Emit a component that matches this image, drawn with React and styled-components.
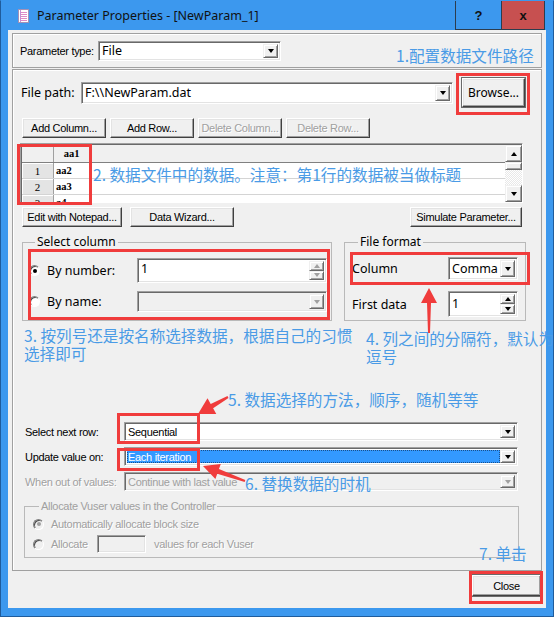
import React from "react";
import styled, { createGlobalStyle } from "styled-components";

const SANS = `"Liberation Sans", Arial, sans-serif`;
const UI = `"Noto Sans", "Open Sans", sans-serif`;
const CJK = `"Noto Sans CJK SC", "Noto Sans", sans-serif`;

const GlobalStyle = createGlobalStyle`
  html, body { margin: 0; padding: 0; background: #fff; }
  body { font-family: ${SANS}; }
  * { box-sizing: border-box; }
`;

const Window = styled.div`
  position: relative;
  width: 554px;
  height: 617px;
  background: #3c98ee;
  border: 1px solid #1f5c9c;
  border-top-color: #3c98ee;
  overflow: hidden;
  display: flex;
  flex-direction: column;
`;

const TitleBar = styled.div`
  height: 29px;
  flex: none;
  display: flex;
  align-items: stretch;
  padding: 0 8px 0 17px;
`;

const TitleText = styled.div`
  flex: 1;
  display: flex;
  align-items: center;
  margin-left: 8px;
  font: 12.5px ${UI};
  color: #111;
`;

const CaptionButton = styled.div`
  width: ${(p) => (p.$close ? 44 : 46)}px;
  display: flex;
  align-items: center;
  justify-content: center;
  background: ${(p) => (p.$close ? "#c75050" : "transparent")};
  border-left: 1px solid #2c3c4e;
  border-bottom: 1px solid #2c3c4e;
  border-right: ${(p) => (p.$close ? "1px solid #2c3c4e" : "none")};
  font: bold 13px ${SANS};
  color: #111;
`;

const Client = styled.div`
  margin: 0 7px;
  height: 578px;
  flex: none;
  background: #f0f0f0;
  padding: 3px 4px 0;
  display: flex;
  flex-direction: column;
`;

const Panel = styled.div`
  width: 530px;
  height: ${(p) => p.$h}px;
  margin-top: ${(p) => p.$mt || 0}px;
  border: 1px solid #a0a0a0;
  box-shadow: inset 1px 1px 0 #fff;
  display: flex;
  flex-direction: ${(p) => (p.$row ? "row" : "column")};
  align-items: ${(p) => (p.$row ? "center" : "stretch")};
  padding-left: ${(p) => (p.$row ? 7 : 0)}px;
`;

const Label = styled.div`
  width: ${(p) => p.$w}px;
  flex: none;
  font: ${(p) => (p.$ui ? `12.5px ${UI}` : `11px ${SANS}`)};
  letter-spacing: ${(p) => (p.$ui ? 0 : -0.3)}px;
  color: ${(p) => (p.$disabled ? "#a0a0a0" : "#000")};
  text-shadow: ${(p) => (p.$disabled ? "1px 1px 0 #fff" : "none")};
  white-space: nowrap;
`;

const Field = styled.div`
  width: ${(p) => p.$w}px;
  height: ${(p) => p.$h}px;
  flex: none;
  display: flex;
  padding: 2px;
  background: ${(p) => (p.$disabled ? "#f0f0f0" : "#fff")};
  border: 1px solid;
  border-color: #a0a0a0 #fff #fff #a0a0a0;
  box-shadow: inset 1px 1px 0 #696969, inset -1px -1px 0 #e3e3e3;
`;

const FieldText = styled.div`
  flex: 1;
  min-width: 0;
  display: flex;
  align-items: ${(p) => (p.$top ? "flex-start" : "center")};
  padding-left: 1px;
  font: ${(p) => (p.$ui ? `12.5px/16px ${UI}` : `11px/14px ${SANS}`)};
  letter-spacing: ${(p) => (p.$ui ? 0 : -0.3)}px;
  white-space: nowrap;
  overflow: hidden;
  color: ${(p) => (p.$selected ? "#fff" : p.$disabled ? "#a0a0a0" : "#000")};
  background: ${(p) => (p.$selected ? "#3399ff" : "transparent")};
  outline: ${(p) => (p.$selected ? "1px dotted #1a4f8a" : "none")};
  outline-offset: -1px;
`;

const RaisedBox = styled.div`
  width: ${(p) => p.$w || 15}px;
  flex: ${(p) => (p.$grow ? 1 : "none")};
  display: flex;
  align-items: center;
  justify-content: center;
  background: #f0f0f0;
  border: 1px solid;
  border-color: #f0f0f0 #696969 #696969 #f0f0f0;
  box-shadow: inset 1px 1px 0 #fff, inset -1px -1px 0 #a0a0a0;
`;

const SpinColumn = styled.div`
  width: 15px;
  flex: none;
  display: flex;
  flex-direction: column;
`;

const Arrow = styled.span`
  width: 0;
  height: 0;
  border-left: 3.5px solid transparent;
  border-right: 3.5px solid transparent;
  border-top: ${(p) => (p.$up ? "none" : `4px solid ${p.$disabled ? "#a0a0a0" : "#000"}`)};
  border-bottom: ${(p) => (p.$up ? `4px solid ${p.$disabled ? "#a0a0a0" : "#000"}` : "none")};
`;

const Button = styled.button`
  width: ${(p) => p.$w}px;
  height: ${(p) => p.$h || 20}px;
  flex: none;
  margin: 0 0 0 ${(p) => p.$ml || 0}px;
  padding: 0;
  background: #f0f0f0;
  border: 1px solid;
  border-color: #fff #404040 #404040 #fff;
  box-shadow: inset -1px -1px 0 #a0a0a0, inset 1px 1px 0 #e3e3e3;
  outline: ${(p) => (p.$default ? "1px solid #6a6a6a" : "none")};
  outline-offset: 0;
  font: ${(p) => (p.$ui ? `12px ${UI}` : `11px ${SANS}`)};
  letter-spacing: ${(p) => (p.$ui ? 0 : -0.3)}px;
  color: ${(p) => (p.disabled ? "#a0a0a0" : "#000")};
  text-shadow: ${(p) => (p.disabled ? "1px 1px 0 #fff" : "none")};
  white-space: nowrap;
`;

const PathRow = styled.div`
  display: flex;
  align-items: center;
  height: 29px;
  margin: 8px 0 0 8px;
`;

const ButtonBar = styled.div`
  display: flex;
  gap: ${(p) => p.$gap}px;
  width: 500px;
  margin: ${(p) => p.$mt}px 0 0 9px;
`;

const Grid = styled.div`
  width: 503px;
  height: 60px;
  margin: 5px 0 0 7px;
  display: flex;
  background: #fff;
  border: 1px solid;
  border-color: #a0a0a0 #fff #fff #a0a0a0;
  box-shadow: inset 1px 1px 0 #696969;
  padding: 1px 0 0 1px;
`;

const GridBody = styled.div`
  flex: 1;
  overflow: hidden;
  display: flex;
  flex-direction: column;
`;

const GridRow = styled.div`
  display: flex;
  height: ${(p) => p.$h}px;
  flex: none;
  background: ${(p) => (p.$head ? "#f0f0f0" : "#fff")};
  border-bottom: 1px solid ${(p) => (p.$head ? "#808080" : "#d4d4d4")};
`;

const NumCell = styled.div`
  width: 32px;
  flex: none;
  display: flex;
  align-items: center;
  justify-content: center;
  background: ${(p) => (p.$head ? "#f0f0f0" : "#e4e4e4")};
  border-right: 1px solid #a0a0a0;
  box-shadow: ${(p) => (p.$head ? "none" : "inset 1px 1px 0 #fff")};
  font: 11px "Liberation Serif", serif;
`;

const DataCell = styled.div`
  width: 36px;
  flex: none;
  display: flex;
  align-items: center;
  justify-content: ${(p) => (p.$head ? "center" : "flex-start")};
  padding-left: ${(p) => (p.$head ? 0 : 2)}px;
  border-right: 1px solid ${(p) => (p.$head ? "#a0a0a0" : "#d4d4d4")};
  font: bold 10.5px "Liberation Serif", serif;
`;

const ScrollBar = styled.div`
  width: 17px;
  flex: none;
  display: flex;
  flex-direction: column;
`;

const ScrollButton = styled(RaisedBox)`
  height: ${(p) => p.$h}px;
`;

const ScrollTrack = styled.div`
  flex: 1;
  background: repeating-conic-gradient(#fff 0 25%, #e8e8e8 0 50%) 0 0 / 2px 2px;
`;

const GroupsRow = styled.div`
  display: flex;
  gap: 12px;
  margin: 7px 0 0 9px;
`;

const Group = styled.fieldset`
  width: ${(p) => p.$w}px;
  height: ${(p) => p.$h}px;
  margin: ${(p) => p.$m || 0};
  padding: ${(p) => p.$pad};
  min-width: 0;
  border: 1px solid #b9b9b9;
`;

const Legend = styled.legend`
  margin-left: 6px;
  padding: 0 2px;
  font: ${(p) => (p.$disabled ? `11px/16px ${SANS}` : `12px/16px ${UI}`)};
  letter-spacing: ${(p) => (p.$disabled ? -0.3 : 0)}px;
  color: ${(p) => (p.$disabled ? "#a0a0a0" : "#000")};
`;

const OptionRow = styled.div`
  display: flex;
  align-items: center;
  height: ${(p) => p.$h}px;
  margin-top: ${(p) => p.$mt || 0}px;
`;

const OptionLabel = styled.div`
  width: ${(p) => (p.$w ? `${p.$w}px` : "auto")};
  flex: none;
  display: flex;
  align-items: center;
  font: ${(p) => (p.$disabled ? `11px ${SANS}` : `12.5px ${UI}`)};
  letter-spacing: ${(p) => (p.$disabled ? -0.3 : 0)}px;
  color: ${(p) => (p.$disabled ? "#a0a0a0" : "#000")};
  text-shadow: ${(p) => (p.$disabled ? "1px 1px 0 #fff" : "none")};
  margin-left: ${(p) => p.$ml || 0}px;
  white-space: nowrap;
`;

const Radio = styled.span`
  width: 11px;
  height: 11px;
  flex: none;
  margin-right: 7px;
  border-radius: 50%;
  border: 1px solid;
  border-color: #808080 #fff #fff #808080;
  box-shadow: inset 1px 1px 0 #505050;
  background: ${(p) => (p.$disabled ? "#f0f0f0" : "#fff")};
  display: flex;
  align-items: center;
  justify-content: center;
  &::after {
    content: "";
    width: 4px;
    height: 4px;
    border-radius: 50%;
    background: ${(p) => (p.$checked ? (p.$disabled ? "#a0a0a0" : "#000") : "transparent")};
  }
`;

const FormBlock = styled.div`
  display: flex;
  flex-direction: column;
  gap: 6px;
  margin: 101px 0 0 12px;
`;

const FormRow = styled.div`
  display: flex;
  align-items: center;
  height: 19px;
`;

const Footer = styled.div`
  display: flex;
  justify-content: flex-end;
  padding: 4px 1px 0 0;
`;

const Mark = styled.div`
  position: absolute;
  left: ${(p) => p.$x - 1}px;
  top: ${(p) => p.$y}px;
  width: ${(p) => p.$w}px;
  height: ${(p) => p.$h}px;
  border: 3px solid #f03c3c;
  pointer-events: none;
`;

const Note = styled.div`
  position: absolute;
  left: ${(p) => p.$x - 1}px;
  top: ${(p) => p.$y}px;
  font: 15.6px/18px ${CJK};
  color: #4a9be6;
  white-space: nowrap;
  pointer-events: none;
`;

const ArrowLayer = styled.svg`
  position: absolute;
  left: -1px;
  top: 0;
  pointer-events: none;
`;

function DocIcon() {
  return (
    <svg width="11" height="29" viewBox="0 0 11 29">
      <rect x="0.5" y="8.5" width="10" height="13" fill="#fff" stroke="#a391b6" />
      <line x1="2.5" y1="9" x2="2.5" y2="21" stroke="#c58fd4" />
      {[11, 13, 15, 17, 19].map((y) => (
        <line key={y} x1="3" y1={y + 0.5} x2="9" y2={y + 0.5} stroke="#e08ac8" />
      ))}
    </svg>
  );
}

function ComboBox({ w, h = 20, value, ui, disabled, selected }) {
  return (
    <Field $w={w} $h={h} $disabled={disabled}>
      <FieldText $ui={ui} $disabled={disabled} $selected={selected}>
        {value}
      </FieldText>
      <RaisedBox>
        <Arrow $disabled={disabled} />
      </RaisedBox>
    </Field>
  );
}

function Spinner({ w, h, value, top, dim }) {
  return (
    <Field $w={w} $h={h}>
      <FieldText $ui $top={top}>
        {value}
      </FieldText>
      <SpinColumn>
        <RaisedBox $grow $w={15}>
          <Arrow $up $disabled={dim} />
        </RaisedBox>
        <RaisedBox $grow $w={15}>
          <Arrow $disabled={dim} />
        </RaisedBox>
      </SpinColumn>
    </Field>
  );
}

const rows = [
  { n: "1", v: "aa2" },
  { n: "2", v: "aa3" },
  { n: "3", v: "a4" },
];

export default function App() {
  return (
    <>
      <GlobalStyle />
      <Window>
        <TitleBar>
          <DocIcon />
          <TitleText>Parameter Properties - [NewParam_1]</TitleText>
          <CaptionButton>?</CaptionButton>
          <CaptionButton $close>x</CaptionButton>
        </TitleBar>

        <Client>
          <Panel $h={35} $row>
            <Label $w={78}>Parameter type:</Label>
            <ComboBox w={183} h={20} value="File" ui />
          </Panel>

          <Panel $h={502} $mt={1}>
            <PathRow>
              <Label $w={60} $ui>
                File path:
              </Label>
              <ComboBox w={372} h={22} value="F:\\NewParam.dat" ui />
              <Button $w={63} $h={29} $ml={9} $ui $default>
                Browse...
              </Button>
            </PathRow>

            <ButtonBar $gap={4} $mt={11}>
              <Button $w={84}>Add Column...</Button>
              <Button $w={84}>Add Row...</Button>
              <Button $w={84} disabled>
                Delete Column...
              </Button>
              <Button $w={84} disabled>
                Delete Row...
              </Button>
            </ButtonBar>

            <Grid>
              <GridBody>
                <GridRow $h={18} $head>
                  <NumCell $head />
                  <DataCell $head>aa1</DataCell>
                </GridRow>
                {rows.map((r) => (
                  <GridRow key={r.n} $h={16}>
                    <NumCell>{r.n}</NumCell>
                    <DataCell>{r.v}</DataCell>
                  </GridRow>
                ))}
              </GridBody>
              <ScrollBar>
                <ScrollButton $w={17} $h={17}>
                  <Arrow $up />
                </ScrollButton>
                <ScrollButton $w={17} $h={8} />
                <ScrollTrack />
                <ScrollButton $w={17} $h={17}>
                  <Arrow />
                </ScrollButton>
              </ScrollBar>
            </Grid>

            <ButtonBar $gap={8} $mt={4}>
              <Button $w={100}>Edit with Notepad...</Button>
              <Button $w={104}>Data Wizard...</Button>
              <Button $w={112} $ml={168}>
                Simulate Parameter...
              </Button>
            </ButtonBar>

            <GroupsRow>
              <Group $w={310} $h={87} $pad="8px 5px 0 6px">
                <Legend>Select column</Legend>
                <OptionRow $h={25}>
                  <OptionLabel $w={108}>
                    <Radio $checked />
                    By number:
                  </OptionLabel>
                  <Spinner w={190} h={25} value="1" top dim />
                </OptionRow>
                <OptionRow $h={21} $mt={8}>
                  <OptionLabel $w={108}>
                    <Radio />
                    By name:
                  </OptionLabel>
                  <ComboBox w={190} h={21} disabled />
                </OptionRow>
              </Group>

              <Group $w={182} $h={87} $pad="7px 5px 0 7px">
                <Legend>File format</Legend>
                <OptionRow $h={23}>
                  <OptionLabel $w={96}>Column</OptionLabel>
                  <ComboBox w={70} h={23} value="Comma" ui />
                </OptionRow>
                <OptionRow $h={26} $mt={11}>
                  <OptionLabel $w={96}>First data</OptionLabel>
                  <Spinner w={70} h={26} value="1" />
                </OptionRow>
              </Group>
            </GroupsRow>

            <FormBlock>
              <FormRow>
                <Label $w={99}>Select next row:</Label>
                <ComboBox w={394} h={19} value="Sequential" />
              </FormRow>
              <FormRow>
                <Label $w={99}>Update value on:</Label>
                <ComboBox w={394} h={19} value="Each iteration" selected />
              </FormRow>
              <FormRow>
                <Label $w={99} $disabled>
                  When out of values:
                </Label>
                <ComboBox w={394} h={19} value="Continue with last value" disabled />
              </FormRow>
            </FormBlock>

            <Group $w={495} $h={60} $m="7px 0 0 11px" $pad="2px 5px 0 8px">
              <Legend $disabled>Allocate Vuser values in the Controller</Legend>
              <OptionRow $h={16}>
                <OptionLabel $disabled>
                  <Radio $checked $disabled />
                  Automatically allocate block size
                </OptionLabel>
              </OptionRow>
              <OptionRow $h={18} $mt={3}>
                <OptionLabel $w={64} $disabled>
                  <Radio $disabled />
                  Allocate
                </OptionLabel>
                <Field $w={49} $h={18} $disabled />
                <OptionLabel $disabled $ml={8}>
                  values for each Vuser
                </OptionLabel>
              </OptionRow>
            </Group>
          </Panel>

          <Footer>
            <Button $w={69} $h={21} $default>
              Close
            </Button>
          </Footer>
        </Client>

        <Mark $x={456} $y={72} $w={74} $h={42} />
        <Mark $x={17} $y={143} $w={75} $h={61} />
        <Mark $x={28} $y={248} $w={302} $h={71} />
        <Mark $x={350} $y={251} $w={180} $h={33} />
        <Mark $x={117} $y={412} $w={83} $h={31} />
        <Mark $x={117} $y={447} $w={83} $h={23} />
        <Mark $x={469} $y={570} $w={74} $h={33} />

        <Note $x={396} $y={45}>1.配置数据文件路径</Note>
        <Note $x={93} $y={164}>2. 数据文件中的数据。注意：第1行的数据被当做标题</Note>
        <Note $x={24} $y={325}>
          3. 按列号还是按名称选择数据，根据自己的习惯
          <br />
          选择即可
        </Note>
        <Note $x={366} $y={328}>
          4. 列之间的分隔符，默认为
          <br />
          逗号
        </Note>
        <Note $x={228} $y={389}>5. 数据选择的方法，顺序，随机等等</Note>
        <Note $x={245} $y={473}>6. 替换数据的时机</Note>
        <Note $x={479} $y={543}>7. 单击</Note>

        <ArrowLayer width="554" height="617" viewBox="0 0 554 617">
          <polygon
            fill="#f03c3c"
            points="429,287 437,302 431,302 430,332 428,332 427,302 421,302"
          />
          <polygon
            fill="#f03c3c"
            points="198,413 216.3,412.9 213.1,407.3 228.5,396.9 227.5,395.1 210.7,402.9 207.5,397.3"
          />
          <polygon
            fill="#f03c3c"
            points="203,465 220.8,462.9 218.95,468.05 245.3,479.1 244.7,480.9 217.25,472.75 215.4,477.9"
          />
        </ArrowLayer>
      </Window>
    </>
  );
}
